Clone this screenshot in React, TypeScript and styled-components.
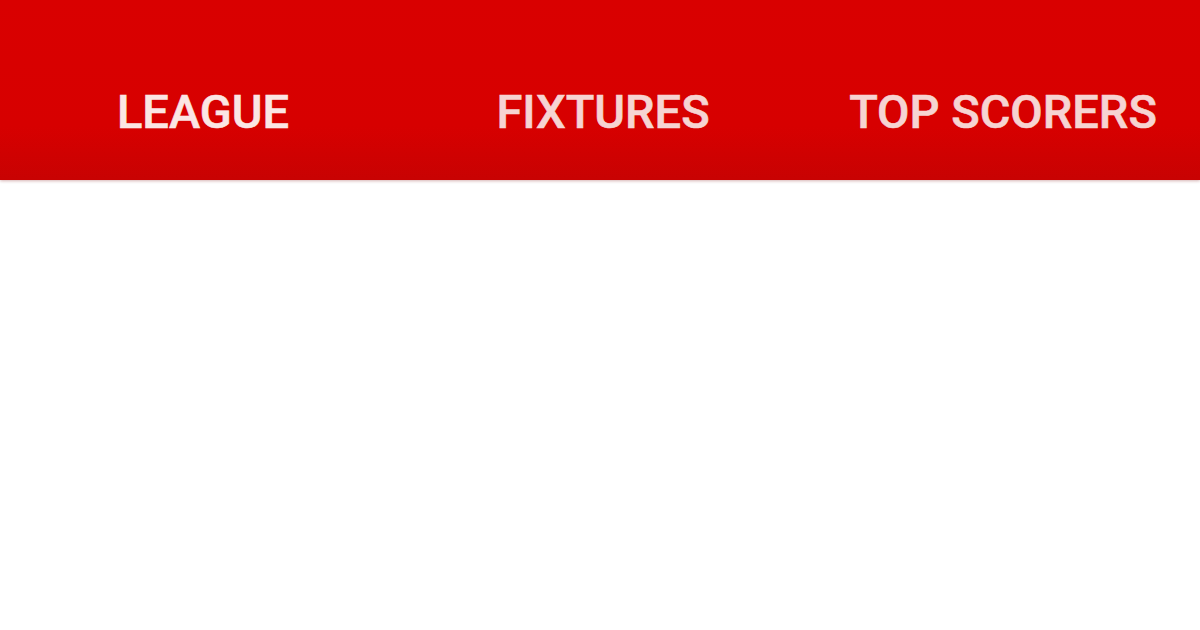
import styled, { createGlobalStyle } from "styled-components";

const GlobalStyle = createGlobalStyle`
    html, body {
        margin: 0;
        padding: 0;
        background: #ffffff;
        font-family: Roboto, "Liberation Sans", sans-serif;
    }
`;

const Page = styled.div`
    width: 1200px;
    height: 630px;
    background: #ffffff;
    overflow: hidden;
`;

const TabBar = styled.nav`
    display: grid;
    grid-template-columns: repeat(3, 1fr);
    height: 180px;
    background: linear-gradient(
        to bottom,
        #d90000 0%,
        #d70000 70%,
        #c80202 100%
    );
    box-shadow: 0 1px 3px rgba(120, 0, 0, 0.3);
`;

const Tab = styled.button<{ $active?: boolean }>`
    appearance: none;
    border: none;
    background: transparent;
    display: flex;
    align-items: center;
    justify-content: center;
    padding: 42px 0 0 6px;
    font-family: Roboto, "Liberation Sans", sans-serif;
    font-weight: 500;
    font-size: 47px;
    text-transform: uppercase;
    color: ${({ $active }) => ($active ? "#fbe6e4" : "#f6d4d2")};
    -webkit-text-stroke: 0.6px currentColor;
    cursor: pointer;
`;

const tabs = ["League", "Fixtures", "Top Scorers"];

export default function App() {
    return (
        <>
            <GlobalStyle />
            <Page>
                <TabBar>
                    {tabs.map((t, i) => (
                        <Tab key={t} $active={i === 0}>
                            {t}
                        </Tab>
                    ))}
                </TabBar>
            </Page>
        </>
    );
}
